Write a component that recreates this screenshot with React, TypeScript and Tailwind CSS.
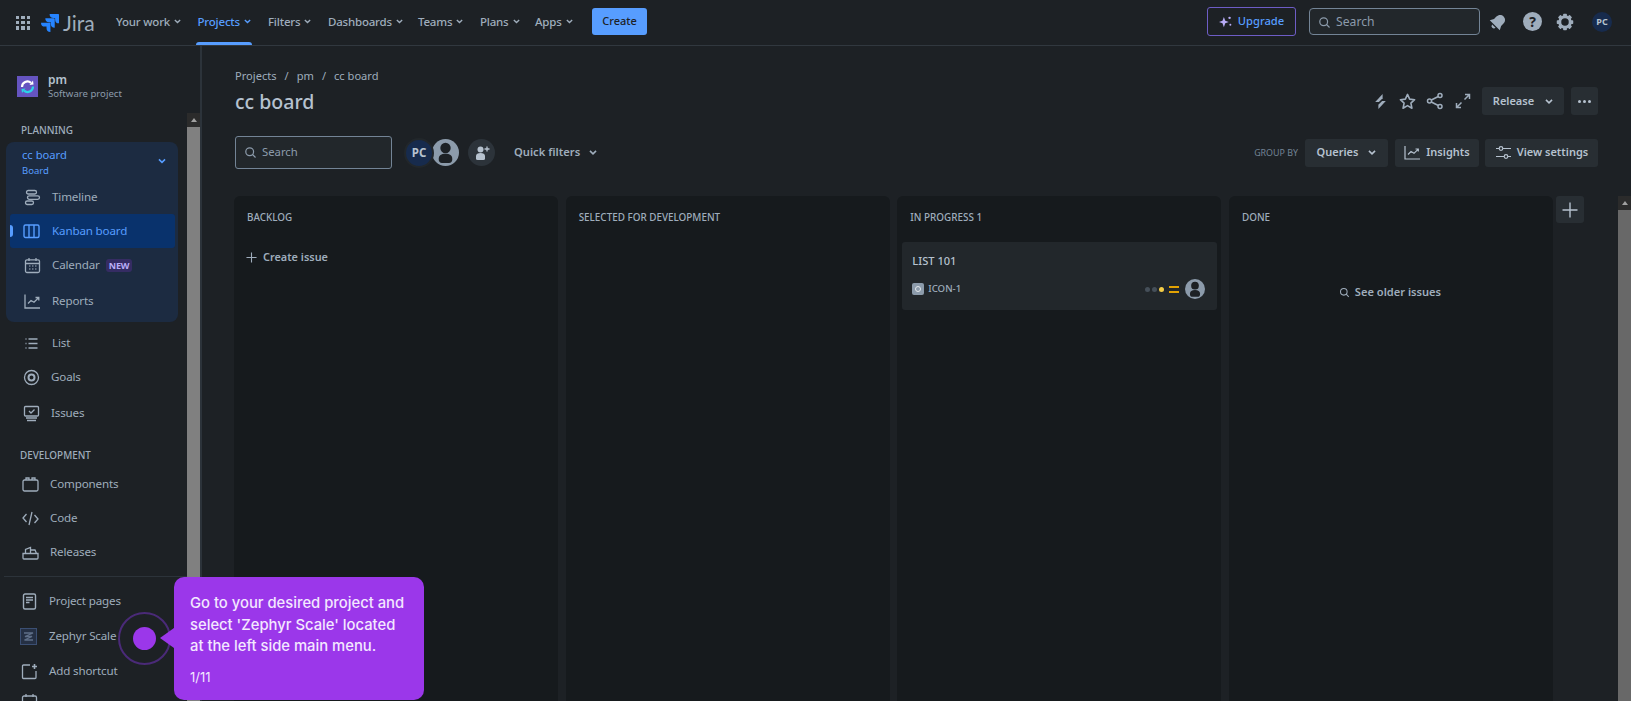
import type { ReactNode } from "react";

const font = "font-['Noto_Sans','Open_Sans',sans-serif]";

function Chevron({ className = "" }: { className?: string }) {
  return (
    <svg viewBox="0 0 10 6" className={className} fill="none" stroke="currentColor" strokeWidth="2">
      <path d="M1.2 1 5 4.6 8.8 1" />
    </svg>
  );
}

function SearchIcon({ className = "" }: { className?: string }) {
  return (
    <svg viewBox="0 0 16 16" className={className} fill="none" stroke="currentColor" strokeWidth="1.5">
      <circle cx="7" cy="7" r="4.8" />
      <path d="m10.5 10.5 3.7 3.7" />
    </svg>
  );
}

function Person({ className = "" }: { className?: string }) {
  return (
    <div className={`flex items-center justify-center rounded-full bg-[#8c9bab] ${className}`}>
      <svg viewBox="0 0 24 24" className="h-full w-full" fill="#1d2125">
        <circle cx="12" cy="8" r="4.6" />
        <path d="M6 17.500c0-2.800 2.200-4.300 6-4.300s6 1.500 6 4.300v1c0 1.700-1.100 2.800-2.800 2.800H8.800C7.100 21.300 6 20.200 6 18.500z" />
      </svg>
    </div>
  );
}

function NavItem({ label, width, active }: { label: string; width: string; active?: boolean }) {
  return (
    <div className={`relative flex h-full shrink-0 items-center gap-[4px] pb-[2px] text-[11.500px] font-medium tracking-[-0.2px] ${width} ${active ? "text-[#579dff]" : "text-[#9fadbc]"}`}>
      <span>{label}</span>
      <Chevron className="h-[5px] w-[7px]" />
      {active && <div className="absolute -left-[2px] bottom-0 h-[3px] w-[56px] rounded-t-sm bg-[#579dff]" />}
    </div>
  );
}

function Header() {
  return (
    <header className="flex h-[46px] shrink-0 items-center border-b border-[#31383f] pl-[16px] pr-[19px]">
      <div className="grid h-[14px] w-[14px] shrink-0 grid-cols-3 gap-[2px]">
        {Array.from({ length: 9 }).map((_, i) => (
          <div key={i} className="bg-[#9fadbc]" />
        ))}
      </div>
      <svg viewBox="0 0 24 24" className="ml-[11px] h-[18px] w-[18px] shrink-0" fill="#2684ff">
        <path d="M11.571 11.513H0a5.218 5.218 0 0 0 5.232 5.215h2.130v2.057A5.215 5.215 0 0 0 12.575 24V12.518a1.005 1.005 0 0 0-1.005-1.005zm5.723-5.756H5.736a5.215 5.215 0 0 0 5.215 5.214h2.129v2.058a5.218 5.218 0 0 0 5.215 5.214V6.758a1.001 1.001 0 0 0-1.001-1.001zM23.013 0H11.455a5.215 5.215 0 0 0 5.215 5.215h2.129v2.057A5.215 5.215 0 0 0 24 12.483V1.005A1.001 1.001 0 0 0 23.013 0Z" />
      </svg>
      <span className="ml-[4px] w-[53px] shrink-0 font-['Lato',sans-serif] text-[21px] font-normal leading-none text-[#9fadbc]">Jira</span>
      <NavItem label="Your work" width="w-[81.500px]" />
      <NavItem label="Projects" width="w-[70.500px]" active />
      <NavItem label="Filters" width="w-[60px]" />
      <NavItem label="Dashboards" width="w-[90px]" />
      <NavItem label="Teams" width="w-[62px]" />
      <NavItem label="Plans" width="w-[55px]" />
      <NavItem label="Apps" width="w-[57px]" />
      <button className="-mt-[2px] flex h-[27px] w-[55px] items-center justify-center rounded-[3px] bg-[#579dff] text-[11px] font-medium text-[#1d2125]">Create</button>
      <div className="flex-1" />
      <button className="-mt-[2px] flex h-[29px] w-[89px] items-center justify-center gap-[6px] rounded-[3px] border border-[#6e5dc6] text-[11.200px] font-medium text-[#579dff]">
        <svg viewBox="0 0 16 16" className="h-[13px] w-[13px]" fill="#b8acf6">
          <path d="M6 2.500 7.700 7 12 8.600 7.700 10.300 6 15 4.300 10.300 0 8.600 4.300 7z" />
          <circle cx="13" cy="3.500" r="1.500" />
          <circle cx="14" cy="12" r="1.200" />
        </svg>
        Upgrade
      </button>
      <div className="-mt-[2px] ml-[13px] flex h-[27px] w-[171px] items-center gap-[5px] rounded-[4px] border border-[#738496] bg-[#22272b] pl-[8px] pt-[1px] text-[12.200px] text-[#8c9bab]">
        <SearchIcon className="h-[13px] w-[13px]" />
        Search
      </div>
      <svg viewBox="0 0 24 24" className="-mt-[2px] ml-[8px] h-[20px] w-[20px] text-[#9fadbc]" fill="currentColor">
        <g transform="rotate(45 12 12)">
          <path d="M12 2.500c-3.500 0-6 2.700-6 6.200v4L3.500 17.500h17L18 12.700v-4c0-3.500-2.500-6.200-6-6.200z" />
          <path d="M9.200 19a2.800 2.800 0 0 0 5.600 0z" />
        </g>
      </svg>
      <div className="-mt-[2px] ml-[15px] flex h-[19px] w-[19px] items-center justify-center rounded-full bg-[#9fadbc] text-[14px] font-bold leading-none text-[#1d2125]">?</div>
      <svg viewBox="0 0 24 24" className="-mt-[2px] ml-[14px] h-[18px] w-[18px] text-[#9fadbc]" fill="currentColor">
        {[0, 45, 90, 135, 180, 225, 270, 315].map((a) => (
          <rect key={a} x="9.500" y="1" width="5" height="5" rx="1" transform={`rotate(${a} 12 12)`} />
        ))}
        <circle cx="12" cy="12" r="7" fill="none" stroke="currentColor" strokeWidth="4" />
      </svg>
      <div className="-mt-[2px] ml-[18px] flex h-[20px] w-[20px] items-center justify-center rounded-full bg-[#172b4d] text-[9px] font-bold text-[#b6c2cf]">PC</div>
    </header>
  );
}

function Row({ icon, label, active, indent = "pl-[24px]", gap = "w-[28px]", h = "h-[34px]", className = "", after }: {
  icon: ReactNode;
  label: string;
  active?: boolean;
  indent?: string;
  gap?: string;
  h?: string;
  className?: string;
  after?: ReactNode;
}) {
  return (
    <div className={`relative flex items-center text-[11.600px] tracking-[-0.15px] ${h} ${indent} ${active ? "text-[#579dff]" : "text-[#9fadbc]"} ${className}`}>
      <div className={`shrink-0 ${gap}`}>{icon}</div>
      <span>{label}</span>
      {after}
    </div>
  );
}

const iconCls = "h-[17px] w-[17px]";

function Stroke({ children }: { children: ReactNode }) {
  return (
    <svg viewBox="0 0 17 17" className={iconCls} fill="none" stroke="currentColor" strokeWidth="1.300">
      {children}
    </svg>
  );
}

function Sidebar() {
  return (
    <aside className="flex w-[202px] shrink-0 border-r-2 border-[#2c333a]">
      <div className="w-[187px] shrink-0">
        <div className="mt-[30px] flex h-[21px] items-center pl-[17px]">
          <svg viewBox="0 0 21 21" className="h-[21px] w-[21px]">
            <rect width="21" height="21" fill="#6554c0" />
            <path d="M5 11a5.500 5.500 0 0 1 9-4.200" fill="none" stroke="#fff" strokeWidth="2.200" />
            <path d="m12.500 9 4-.5-.5-4z" fill="#fff" />
            <path d="M16 10.500a5.500 5.500 0 0 1-9 4.200" fill="none" stroke="#2bd4e6" strokeWidth="2.200" />
            <path d="m8.500 12.500-4 .5.500 4z" fill="#2bd4e6" />
          </svg>
          <div className="ml-[10px] flex flex-col">
            <span className="text-[12px] font-semibold leading-[14px] text-[#b6c2cf]">pm</span>
            <span className="text-[9.600px] leading-[13px] text-[#8c9bab]">Software project</span>
          </div>
        </div>
        <div className="mt-[25px] h-[16px] pl-[21px] text-[10px] font-medium leading-[16px] text-[#9fadbc]">PLANNING</div>
        <div className="ml-[6px] mt-[4px] h-[180px] w-[172px] rounded-[8px] bg-[#1c2b41]">
          <div className="flex h-[38px] items-center justify-between pl-[16px] pr-[12px] pt-[3px] text-[#579dff]">
            <div className="flex flex-col">
              <span className="text-[11.200px] leading-[16px]">cc board</span>
              <span className="text-[9.500px] leading-[15px]">Board</span>
            </div>
            <Chevron className="mb-[4px] h-[6px] w-[8px]" />
          </div>
          <Row
            indent="pl-[18px]"
            label="Timeline"
            icon={
              <Stroke>
                <rect x="2.500" y="1.500" width="10" height="3.500" rx="1.700" />
                <rect x="3.500" y="6.800" width="12" height="3.500" rx="1.700" />
                <rect x="1.500" y="12" width="8" height="3.500" rx="1.700" />
              </Stroke>
            }
          />
          <div className="relative ml-[4px] h-[34px] w-[165px] rounded-[3px] bg-[#09326c]">
            <div className="absolute left-0 top-[11px] h-[12px] w-[3px] rounded-r-sm bg-[#579dff]" />
            <Row
              active
              indent="pl-[13px]"
              gap="w-[29px]"
              label="Kanban board"
              icon={
                <svg viewBox="0 0 17 17" className={iconCls} fill="none" stroke="currentColor" strokeWidth="1.400">
                  <rect x="1" y="2" width="15" height="12.500" rx="1.500" />
                  <path d="M6 2v12.500M11 2v12.500" />
                </svg>
              }
            />
          </div>
          <Row
            indent="pl-[18px]"
            label="Calendar"
            after={<span className="ml-[6px] rounded-[3px] bg-[#352c63] px-[3px] text-[9px] font-bold leading-[13px] text-[#b8acf6]">NEW</span>}
            icon={
              <Stroke>
                <rect x="1.500" y="2.800" width="14" height="12.700" rx="1.500" />
                <path d="M1.500 6.500h14M5 1v3M12 1v3" />
                <path d="M5 9h1.500M8 9h1.500M11 9h1.500M5 12h1.500M8 12h1.500M11 12h1.500" strokeWidth="1.200" />
              </Stroke>
            }
          />
          <Row
            indent="pl-[18px]"
            label="Reports"
            className="mt-[2px]"
            icon={
              <Stroke>
                <path d="M1 1.500v13.500h15" />
                <path d="m4 10.500 3-3 3 1.800 4.500-4.500M11.500 4.500h3.300v3" />
              </Stroke>
            }
          />
        </div>
        <div className="mt-[4px]">
          <Row
            indent="pl-[23px]"
            gap="w-[29px]"
            label="List"
            icon={
              <Stroke>
                <path d="M5.500 4h9M5.500 8.500h9M5.500 13h9M2.500 4h1M2.500 8.500h1M2.500 13h1" strokeWidth="1.500" />
              </Stroke>
            }
          />
          <Row
            indent="pl-[23px]"
            gap="w-[28px]"
            label="Goals"
            icon={
              <Stroke>
                <circle cx="8.500" cy="8.500" r="7" />
                <circle cx="8.500" cy="8.500" r="3" strokeWidth="2" />
              </Stroke>
            }
          />
          <Row
            indent="pl-[23px]"
            gap="w-[28px]"
            label="Issues"
            className="mt-[2px]"
            icon={
              <Stroke>
                <rect x="1.500" y="1.500" width="14" height="9.500" rx="1" />
                <path d="m6 6 2 2 3.500-3.500M3 13h11M4 15.500h9" />
              </Stroke>
            }
          />
        </div>
        <div className="mt-[17px] h-[16px] pl-[20px] text-[9.900px] font-medium leading-[16px] text-[#9fadbc]">DEVELOPMENT</div>
        <div className="mt-[4px]">
          <Row
            indent="pl-[22px]"
            gap="w-[28px]"
            label="Components"
            icon={
              <Stroke>
                <rect x="1" y="4" width="15" height="11" rx="1.500" />
                <path d="M4 4V2h3v2M10 4V2h3v2" />
              </Stroke>
            }
          />
          <Row
            indent="pl-[22px]"
            gap="w-[28px]"
            label="Code"
            icon={
              <Stroke>
                <path d="M4.500 4 1 8l3.500 4M12.500 5l3.500 4-3.500 4M10 2 7 15" />
              </Stroke>
            }
          />
          <Row
            indent="pl-[22px]"
            gap="w-[28px]"
            label="Releases"
            icon={
              <Stroke>
                <path d="M1 9.500h15v4.500a1 1 0 0 1-1 1H2a1 1 0 0 1-1-1zM3.500 9.500v-4l5-2v6M8.500 6H13l1.500 3.500" />
              </Stroke>
            }
          />
        </div>
        <div className="ml-[4px] mt-[7px] h-px bg-[#2c333a]" />
        <div className="mt-[7px]">
          <Row
            indent="pl-[21px]"
            label="Project pages"
            icon={
              <Stroke>
                <rect x="2.500" y="1" width="12" height="15" rx="1.500" strokeWidth="1.400" />
                <path d="M5 4.500h7M5 7h7M5 9.500h3.500" strokeWidth="1.300" />
              </Stroke>
            }
          />
          <Row
            indent="pl-[20px]"
            gap="w-[29px]"
            label="Zephyr Scale"
            className="mt-px"
            icon={
              <svg viewBox="0 0 17 17" className={iconCls} fill="none">
                <rect x=".5" y=".5" width="16" height="16" fill="#253044" stroke="#3b4f73" />
                <path d="M4 5h9L5 8.500h7L4.500 12H13" stroke="#5f6f88" strokeWidth="1.300" />
              </svg>
            }
          />
          <Row
            indent="pl-[21px]"
            label="Add shortcut"
            className="mt-px"
            icon={
              <Stroke>
                <path d="M9 2H2.500a1 1 0 0 0-1 1v11.500a1 1 0 0 0 1 1H14a1 1 0 0 0 1-1V8" />
                <path d="M13.500 1v5M11 3.500h5" strokeWidth="1.600" />
              </Stroke>
            }
          />
          <div className="pl-[21px] pt-[5px] text-[#9fadbc]">
            <Stroke>
              <rect x="1.500" y="3" width="14" height="12" rx="1.500" />
              <path d="M5 1v3M12 1v3" />
            </Stroke>
          </div>
        </div>
      </div>
      <Scrollbar top="mt-[67px]" thumb="bg-[#808080]" />
    </aside>
  );
}

function Scrollbar({ top, thumb }: { top: string; thumb: string }) {
  return (
    <div className={`flex w-[13px] shrink-0 flex-col bg-[#2b2b2b] ${top}`}>
      <div className="flex h-[14px] items-center justify-center">
        <div className="h-0 w-0 border-x-[3.500px] border-b-[4px] border-x-transparent border-b-[#a0a0a0]" />
      </div>
      <div className={`flex-1 ${thumb}`} />
    </div>
  );
}

function Btn({ children, width }: { children: ReactNode; width: string }) {
  return (
    <button className={`flex h-[28px] items-center justify-center rounded-[3px] bg-[#282e33] text-[11px] font-semibold text-[#b6c2cf] ${width}`}>
      {children}
    </button>
  );
}

function Column({ title, children }: { title: string; children?: ReactNode }) {
  return (
    <section className="h-full w-[324px] shrink-0 rounded-t-[6px] bg-[#161a1d]">
      <div className="flex h-[42px] items-center pl-[13px] text-[9.900px] font-medium text-[#9fadbc]">{title}</div>
      {children}
    </section>
  );
}

function Main() {
  return (
    <main className="flex min-w-0 flex-1 flex-col">
      <div className="h-[150px] shrink-0 pl-[33px] pr-[33px]">
        <div className="flex h-[100px] items-start justify-between">
          <div>
            <div className="mt-[21px] flex h-[18px] items-center text-[11.100px] leading-none text-[#9fadbc]">
              <span>Projects</span>
              <span className="mx-[8px]">/</span>
              <span>pm</span>
              <span className="mx-[8px]">/</span>
              <span>cc board</span>
            </div>
            <h1 className="mt-[2px] text-[19.500px] font-medium leading-[30px] text-[#b6c2cf]">cc board</h1>
          </div>
          <div className="mt-[41px] flex items-center text-[#9fadbc]">
            <svg viewBox="0 0 16 16" className="h-[17px] w-[17px]" fill="currentColor">
              <path d="M10 1 3 8.500h3.500L10 5z" />
              <path d="M13 7.500H9.500L6 11v4z" />
            </svg>
            <svg viewBox="0 0 24 24" className="ml-[9px] h-[19px] w-[19px]" fill="none" stroke="currentColor" strokeWidth="2">
              <path d="m12 3 2.700 6 6.300.7-4.700 4.300 1.300 6.500-5.600-3.300-5.600 3.300 1.300-6.500L3 9.700 9.300 9z" strokeLinejoin="round" />
            </svg>
            <svg viewBox="0 0 18 18" className="ml-[9px] h-[18px] w-[18px]" fill="none" stroke="currentColor" strokeWidth="1.500">
              <circle cx="3.500" cy="9" r="2" />
              <circle cx="14" cy="3.500" r="2" />
              <circle cx="14" cy="14.500" r="2" />
              <path d="m5.300 8 7-3.500M5.300 10l7 3.500" />
            </svg>
            <svg viewBox="0 0 16 16" className="ml-[11px] h-[16px] w-[16px]" fill="none" stroke="currentColor" strokeWidth="1.500">
              <path d="M10 1.500h4.500V6M14.500 1.500 9.500 6.500M6 14.500H1.500V10M1.500 14.500l5-5" />
            </svg>
            <div className="ml-[11px]">
              <Btn width="w-[82px] gap-[11px]">
                Release
                <Chevron className="h-[5px] w-[8px]" />
              </Btn>
            </div>
            <div className="ml-[7px]">
              <Btn width="w-[27px] gap-[2px]">
                <span className="h-[3px] w-[3px] rounded-full bg-[#b6c2cf]" />
                <span className="h-[3px] w-[3px] rounded-full bg-[#b6c2cf]" />
                <span className="h-[3px] w-[3px] rounded-full bg-[#b6c2cf]" />
              </Btn>
            </div>
          </div>
        </div>
        <div className="-mt-[10px] flex items-center">
          <div className="flex h-[33px] w-[157px] items-center gap-[5px] rounded-[3px] border border-[#738496] bg-[#22272b] pl-[8px] text-[11.300px] text-[#8c9bab]">
            <SearchIcon className="h-[13px] w-[13px]" />
            Search
          </div>
          <div className="relative z-10 ml-[12px] flex h-[30px] w-[30px] items-center justify-center rounded-full border-2 border-[#22272b] bg-[#172b4d] text-[11.500px] font-bold text-[#b6c2cf]">PC</div>
          <Person className="-ml-[2px] h-[27px] w-[27px] overflow-hidden" />
          <div className="ml-[9px] flex h-[27px] w-[27px] items-center justify-center rounded-full bg-[#2c333a]">
            <svg viewBox="0 0 18 18" className="h-[18px] w-[18px]" fill="#b6c2cf">
              <circle cx="7.500" cy="5.500" r="3" />
              <path d="M3 12c0-2 1.800-3 4.500-3s4.500 1 4.500 3v2.500a1.500 1.500 0 0 1-1.500 1.500h-6A1.500 1.500 0 0 1 3 14.500z" />
              <path d="M14 2.500v5M11.500 5h5" stroke="#b6c2cf" strokeWidth="1.300" />
            </svg>
          </div>
          <div className="ml-[19px] flex items-center gap-[9px] text-[11.200px] font-semibold text-[#9fadbc]">
            Quick filters
            <Chevron className="h-[5px] w-[8px]" />
          </div>
          <div className="flex-1" />
          <span className="mr-[7px] text-[8.900px] text-[#738496]">GROUP BY</span>
          <Btn width="w-[83px] gap-[10px]">
            Queries
            <Chevron className="h-[5px] w-[8px]" />
          </Btn>
          <div className="ml-[7px]">
            <Btn width="w-[84px] gap-[5px]">
              <svg viewBox="0 0 17 17" className="h-[17px] w-[17px]" fill="none" stroke="currentColor" strokeWidth="1.200">
                <path d="M1 2v13h15" />
                <path d="m4 10.500 3-3 3 1.800 4-4M11.500 5H14.300v2.600" />
              </svg>
              Insights
            </Btn>
          </div>
          <div className="ml-[6px]">
            <Btn width="w-[113px] gap-[5px]">
              <svg viewBox="0 0 17 17" className="h-[17px] w-[17px]" fill="none" stroke="currentColor" strokeWidth="1.200">
                <path d="M1 4.500h3M8 4.500h8M1 12.500h8M13 12.500h3" />
                <circle cx="6" cy="4.500" r="1.800" />
                <circle cx="11" cy="12.500" r="1.800" />
              </svg>
              View settings
            </Btn>
          </div>
        </div>
      </div>
      <div className="flex min-h-0 flex-1 pl-[32px]">
        <div className="flex min-w-0 flex-1 gap-[7.670px]">
          <Column title="BACKLOG">
            <div className="mt-[9px] flex h-[20px] items-center pl-[12px] text-[10.900px] font-semibold text-[#9fadbc]">
              <svg viewBox="0 0 12 12" className="mr-[6px] h-[11px] w-[11px]" fill="none" stroke="currentColor" strokeWidth="1.200">
                <path d="M6 .5v11M.5 6h11" />
              </svg>
              Create issue
            </div>
          </Column>
          <Column title="SELECTED FOR DEVELOPMENT" />
          <Column title="IN PROGRESS 1">
            <div className="ml-[5px] mt-[4px] h-[68px] w-[315px] rounded-[3px] bg-[#22272b] pl-[10px] pr-[12px] pt-[10px]">
              <div className="text-[11.100px] font-medium leading-[18px] text-[#b6c2cf]">LIST 101</div>
              <div className="mt-[9px] flex h-[20px] items-center">
                <div className="flex h-[12px] w-[12px] items-center justify-center rounded-[2px] bg-[#8c9bab]">
                  <div className="h-[6px] w-[6px] rounded-full border-[1.500px] border-[#e5e9ed]" />
                </div>
                <span className="ml-[4px] text-[9.600px] font-medium text-[#9fadbc]">ICON-1</span>
                <div className="flex-1" />
                <div className="flex items-center gap-[2px]">
                  <span className="h-[5px] w-[5px] rounded-full bg-[#454f59]" />
                  <span className="h-[5px] w-[5px] rounded-full bg-[#454f59]" />
                  <span className="h-[5px] w-[5px] rounded-full bg-[#f5cd47]" />
                </div>
                <div className="ml-[5px] flex w-[10px] flex-col gap-[3px]">
                  <div className="h-[2px] bg-[#e2a203]" />
                  <div className="h-[2px] bg-[#e2a203]" />
                </div>
                <Person className="ml-[6px] h-[20px] w-[20px] overflow-hidden" />
              </div>
            </div>
          </Column>
          <Column title="DONE">
            <div className="mt-[44px] flex h-[20px] items-center justify-center pr-[2px] text-[11.100px] font-semibold text-[#9fadbc]">
              <SearchIcon className="mr-[5px] h-[11px] w-[11px]" />
              See older issues
            </div>
          </Column>
        </div>
        <div className="ml-[3px] flex h-[27px] w-[28px] shrink-0 items-center justify-center rounded-[3px] bg-[#282e33] text-[#b6c2cf]">
          <svg viewBox="0 0 16 16" className="h-[16px] w-[16px]" fill="none" stroke="currentColor" strokeWidth="1.400">
            <path d="M8 .5v15M.5 8h15" />
          </svg>
        </div>
        <div className="ml-[34px] flex">
          <Scrollbar top="" thumb="bg-[#686868]" />
        </div>
      </div>
    </main>
  );
}

function Coachmark() {
  return (
    <>
      <div className="absolute left-[118px] top-[612px] flex h-[53px] w-[53px] items-center justify-center rounded-full border-2 border-[#4a2a78]">
        <div className="h-[23px] w-[23px] rounded-full bg-[#9b37ea]" />
      </div>
      <div className="absolute left-[174px] top-[577px] h-[123px] w-[250px] rounded-[10px] bg-[#9b37ea] pl-[16px] pt-[16px] font-['Inter',sans-serif] text-[14.800px] font-medium leading-[21.500px] text-[#f3e8ff]">
        <div className="absolute -left-[14px] top-[51px] h-0 w-0 border-y-[10px] border-r-[14px] border-y-transparent border-r-[#9b37ea]" />
        <p className="whitespace-nowrap">Go to your desired project and</p>
        <p className="whitespace-nowrap">select 'Zephyr Scale' located</p>
        <p className="whitespace-nowrap">at the left side main menu.</p>
        <p className="mt-[9px] text-[13px] font-normal">1/11</p>
      </div>
    </>
  );
}

export default function App() {
  return (
    <div className={`relative flex h-[701px] w-full flex-col overflow-hidden bg-[#1d2125] ${font}`}>
      <Header />
      <div className="flex min-h-0 flex-1">
        <Sidebar />
        <Main />
      </div>
      <Coachmark />
    </div>
  );
}
